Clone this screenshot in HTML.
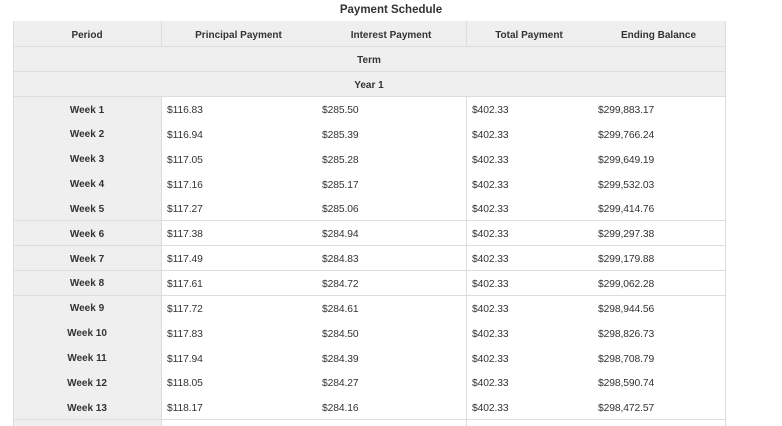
<!DOCTYPE html>
<html><head><style>
body{margin:0;width:782px;height:426px;background:#fff;font-family:"Liberation Sans",sans-serif;color:#333;position:relative;overflow:hidden}
.t{position:absolute;left:0;top:0;width:782px;text-align:center;font-weight:bold;font-size:11.5px;line-height:20px}
.a{position:absolute}
.h{position:absolute;font-weight:bold;font-size:10px;text-align:center;line-height:25px;margin-top:1.5px}
.c{position:absolute;font-size:10.3px;line-height:25px;letter-spacing:-0.1px;margin-top:2px}
</style></head><body>
<div class="t">Payment Schedule</div>
<div class="a" style="left:13px;top:21px;width:712px;height:75px;background:#efefef"></div>
<div class="a" style="left:13px;top:96px;width:148px;height:330px;background:#efefef"></div>
<div class="a" style="left:13px;top:21px;width:1px;height:405px;background:#ddd"></div>
<div class="a" style="left:161px;top:21px;width:1px;height:25px;background:#ddd"></div>
<div class="a" style="left:466px;top:21px;width:1px;height:25px;background:#ddd"></div>
<div class="a" style="left:161px;top:96px;width:1px;height:330px;background:#ddd"></div>
<div class="a" style="left:466px;top:96px;width:1px;height:330px;background:#ddd"></div>
<div class="a" style="left:725px;top:21px;width:1px;height:405px;background:#ddd"></div>
<div class="a" style="left:13px;top:46px;width:712px;height:1px;background:#ddd"></div>
<div class="a" style="left:13px;top:71px;width:712px;height:1px;background:#ddd"></div>
<div class="a" style="left:13px;top:96px;width:712px;height:1px;background:#ddd"></div>
<div class="a" style="left:13px;top:220px;width:712px;height:1px;background:#ddd"></div>
<div class="a" style="left:13px;top:245px;width:712px;height:1px;background:#ddd"></div>
<div class="a" style="left:13px;top:270px;width:712px;height:1px;background:#ddd"></div>
<div class="a" style="left:13px;top:295px;width:712px;height:1px;background:#ddd"></div>
<div class="a" style="left:13px;top:419px;width:712px;height:1px;background:#ddd"></div>
<div class="h" style="left:13px;top:21px;width:148px">Period</div>
<div class="h" style="left:161px;top:21px;width:155px">Principal Payment</div>
<div class="h" style="left:316px;top:21px;width:150px">Interest Payment</div>
<div class="h" style="left:466px;top:21px;width:126px">Total Payment</div>
<div class="h" style="left:592px;top:21px;width:133px">Ending Balance</div>
<div class="h" style="left:13px;top:46px;width:712px">Term</div>
<div class="h" style="left:13px;top:71px;width:712px">Year 1</div>
<div id="rows"></div>
<script>
var d=[["116.83","285.50","299,883.17"],["116.94","285.39","299,766.24"],["117.05","285.28","299,649.19"],["117.16","285.17","299,532.03"],["117.27","285.06","299,414.76"],["117.38","284.94","299,297.38"],["117.49","284.83","299,179.88"],["117.61","284.72","299,062.28"],["117.72","284.61","298,944.56"],["117.83","284.50","298,826.73"],["117.94","284.39","298,708.79"],["118.05","284.27","298,590.74"],["118.17","284.16","298,472.57"]];
var h="";
for(var i=0;i<d.length;i++){var y=96+i*24.85;
h+='<div class="h" style="left:13px;top:'+y+'px;width:148px">Week '+(i+1)+'</div>';
h+='<div class="c" style="left:167px;top:'+y+'px">$'+d[i][0]+'</div>';
h+='<div class="c" style="left:322px;top:'+y+'px">$'+d[i][1]+'</div>';
h+='<div class="c" style="left:472px;top:'+y+'px">$402.33</div>';
h+='<div class="c" style="left:598px;top:'+y+'px">$'+d[i][2]+'</div>';}
document.getElementById("rows").innerHTML=h;
</script>
</body></html>
